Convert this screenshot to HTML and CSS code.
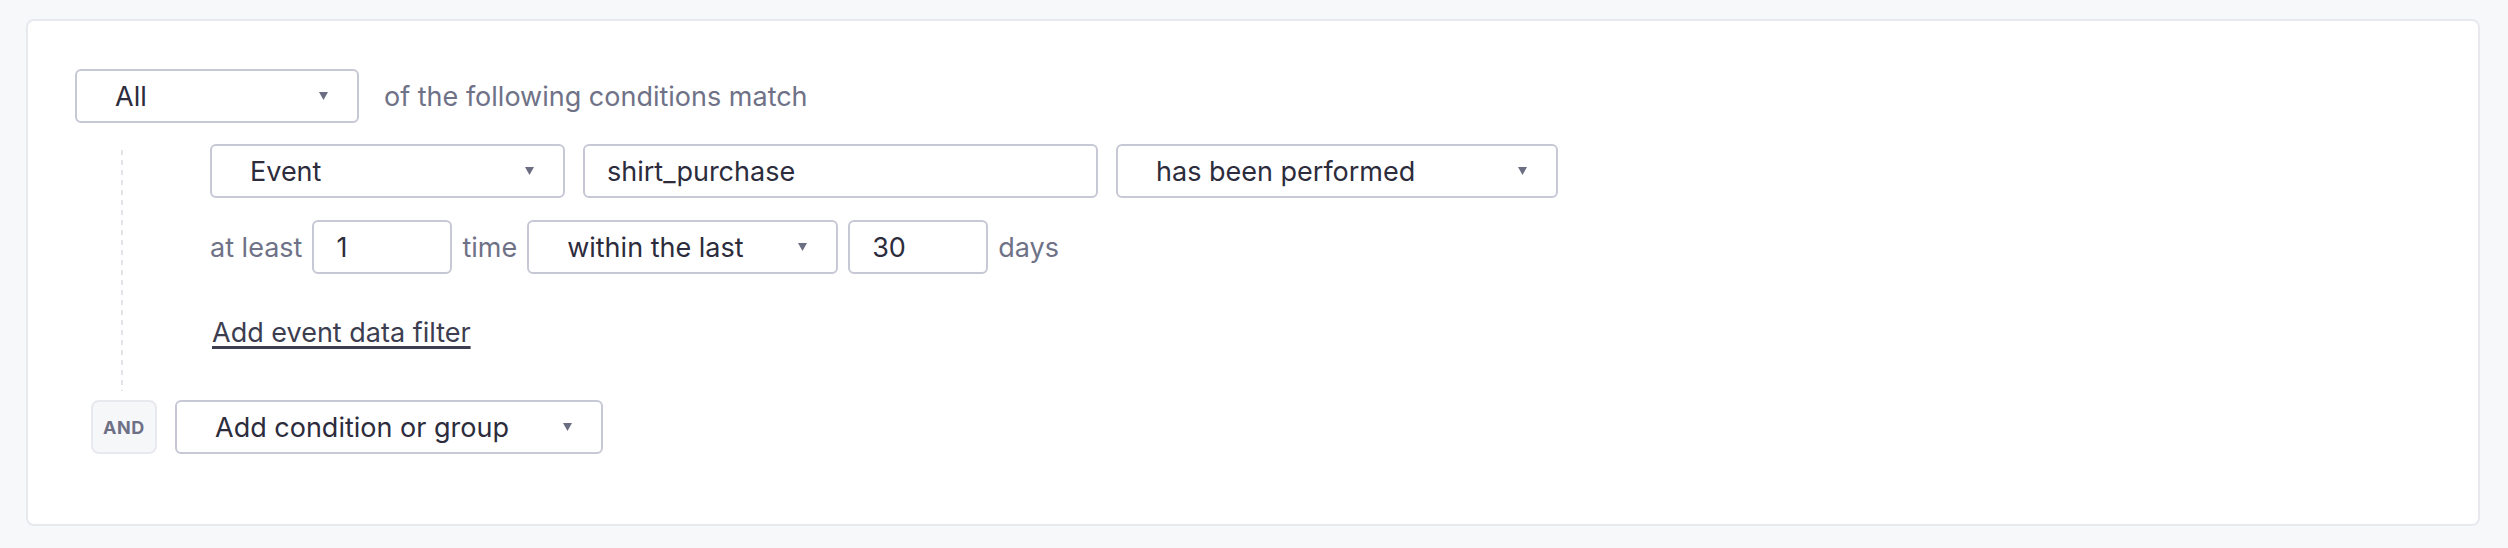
FILE: index.html
```html
<!DOCTYPE html>
<html lang="en">
<head>
<meta charset="utf-8">
<title>Segment conditions</title>
<link rel="stylesheet" href="styles.css">
</head>
<body>
<div class="card">
  <div class="match-row">
    <div class="field select w-all"><span>All</span><svg class="caret" viewBox="0 0 9 8" width="9" height="8"><polygon points="0,0 9,0 4.5,8"/></svg></div>
    <span class="muted">of the following conditions match</span>
  </div>
  <div class="conditions">
    <div class="rail"></div>
    <div class="cond-body">
      <div class="row">
        <div class="field select w-event"><span>Event</span><svg class="caret" viewBox="0 0 9 8" width="9" height="8"><polygon points="0,0 9,0 4.5,8"/></svg></div>
        <div class="field input w-name"><span>shirt_purchase</span></div>
        <div class="field select w-perf"><span>has been performed</span><svg class="caret" viewBox="0 0 9 8" width="9" height="8"><polygon points="0,0 9,0 4.5,8"/></svg></div>
      </div>
      <div class="row row-tight">
        <span class="muted">at least</span>
        <div class="field input w-num"><span>1</span></div>
        <span class="muted">time</span>
        <div class="field select w-within"><span>within the last</span><svg class="caret" viewBox="0 0 9 8" width="9" height="8"><polygon points="0,0 9,0 4.5,8"/></svg></div>
        <div class="field input w-num"><span>30</span></div>
        <span class="muted">days</span>
      </div>
      <div class="link-row"><a class="link" href="#">Add event data filter</a></div>
    </div>
  </div>
  <div class="and-row">
    <div class="and-badge">AND</div>
    <div class="field select w-add"><span>Add condition or group</span><svg class="caret" viewBox="0 0 9 8" width="9" height="8"><polygon points="0,0 9,0 4.5,8"/></svg></div>
  </div>
</div>
</body>
</html>
```

FILE: styles.css
```css
html, body {
  margin: 0;
  padding: 0;
}
body {
  background: #f7f8fa;
  font-family: Inter, "Noto Sans", "Liberation Sans", sans-serif;
  font-size: 27px;
  color: #2f2f40;
}
.card {
  margin: 19px 28px 0 26px;
  height: 507px;
  box-sizing: border-box;
  background: #ffffff;
  border: 2px solid #e8e9ef;
  border-radius: 8px;
  padding: 48px 47px 0 47px;
}
.match-row {
  display: flex;
  align-items: center;
  gap: 25px;
}
.muted {
  color: #6f7287;
  white-space: nowrap;
}
.field {
  box-sizing: border-box;
  height: 54px;
  border: 2px solid #c7c8d5;
  border-radius: 6px;
  background: #fff;
  display: flex;
  align-items: center;
  white-space: nowrap;
  color: #2c2c3c;
}
.select {
  justify-content: space-between;
  padding: 0 29px 0 38px;
}
.input {
  padding: 0 22px;
}
.caret {
  fill: #6b6e82;
  flex: none;
}
.w-all { width: 284px; }
.w-event { width: 355px; }
.w-name { width: 515px; }
.w-perf { width: 442px; }
.w-num { width: 140px; }
.w-within { width: 311px; }
.w-add { width: 428px; }

.conditions {
  display: flex;
  margin-top: 21px;
}
.rail {
  flex: none;
  width: 2px;
  margin: 6px 0 -39px 46px;
  background: repeating-linear-gradient(to bottom, #e3e4ea 0, #e3e4ea 5px, transparent 5px, transparent 10px);
}
.cond-body {
  margin-left: 87px;
}
.row {
  display: flex;
  align-items: center;
  gap: 18px;
}
.row-tight {
  margin-top: 22px;
  gap: 10px;
}
.link-row {
  margin-top: 38px;
  height: 40px;
  display: flex;
  align-items: center;
  padding-left: 2px;
}
.link {
  color: #3d3d50;
  text-decoration: underline;
  text-decoration-thickness: 3px;
  text-underline-offset: 4px;
}
.and-row {
  display: flex;
  align-items: center;
  gap: 18px;
  margin-top: 48px;
  margin-left: 16px;
}
.and-badge {
  box-sizing: border-box;
  width: 66px;
  height: 54px;
  border: 2px solid #e8e9ef;
  border-radius: 8px;
  background: #f6f7f9;
  color: #6e7186;
  font-weight: 700;
  font-size: 18px;
  letter-spacing: 0.6px;
  display: flex;
  align-items: center;
  justify-content: center;
}
```
